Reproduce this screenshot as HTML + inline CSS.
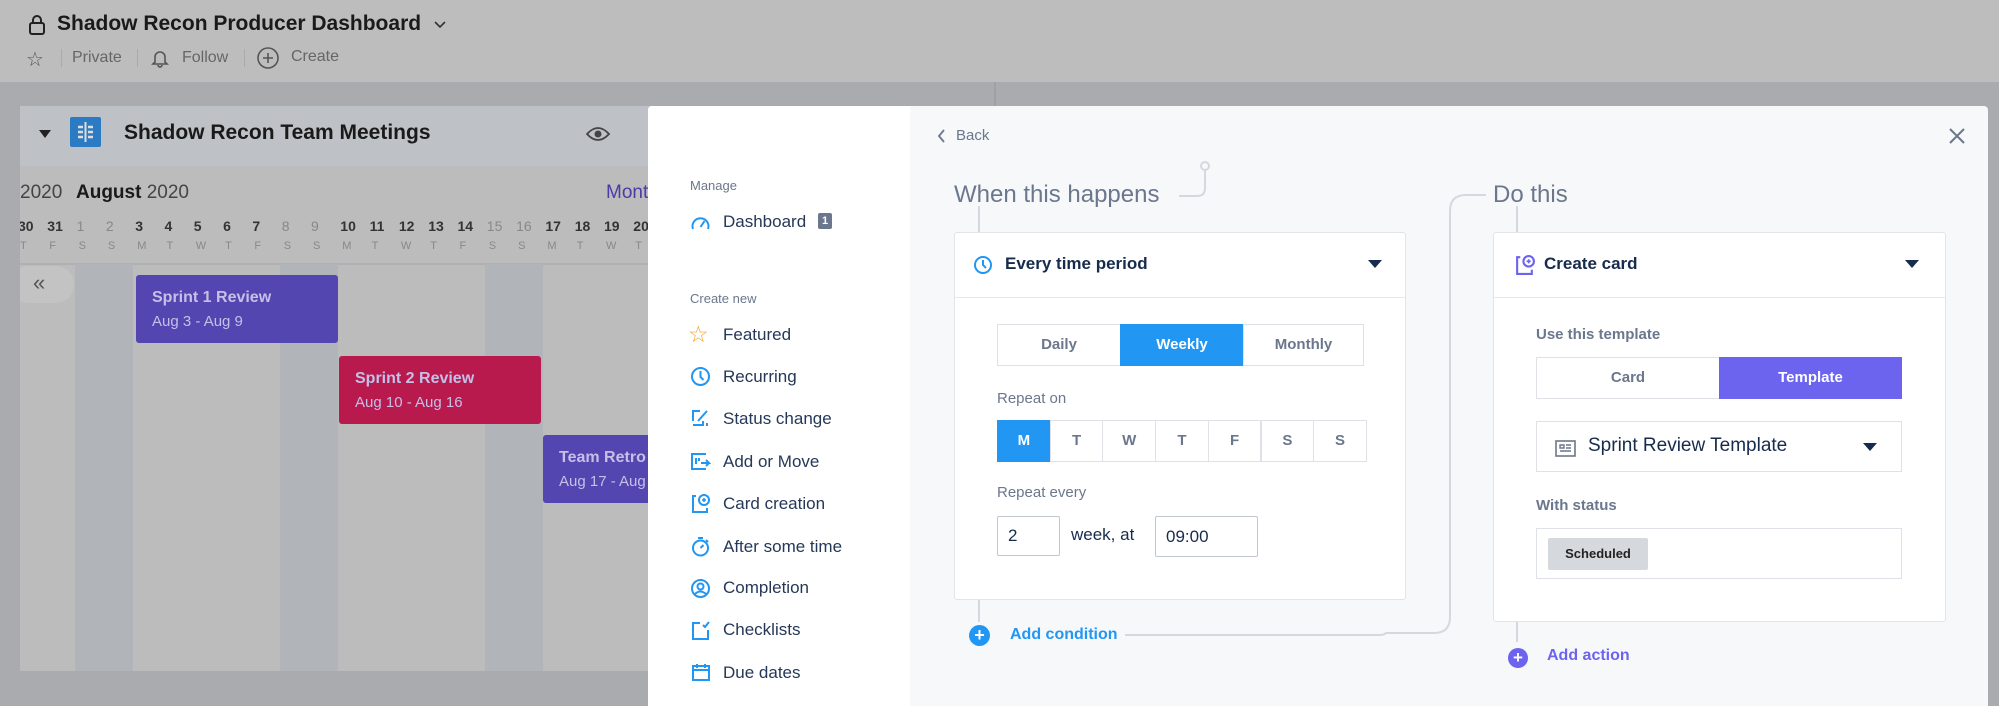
<!DOCTYPE html>
<html><head><meta charset="utf-8"><style>
*{margin:0;padding:0;box-sizing:border-box}
body{width:1999px;height:685px;overflow:hidden;position:relative;background:#a9abaf;font-family:"Liberation Sans",sans-serif;color:#172b4d}
.a{position:absolute;white-space:nowrap}
.top{left:0;top:0;width:1999px;height:82px;background:#bdbdbd}
.panel{left:20px;top:106px;width:640px;height:565px;background:#bcbcbc;overflow:hidden}
.ph{left:0;top:0;width:640px;height:61px;background:#bec1c6}
.col{top:158px;width:29.3px;height:420px}
.wk{background:#b1b4b9}
.ev{height:68px;border-radius:3px;padding:14px 0 0 16px;color:#c4c0e8;font-size:15px}
.ev b{display:block;font-size:16px;margin-bottom:6px}
.modal{left:648px;top:106px;width:1340px;height:600px;background:#f7f8fa;border-radius:4px 4px 0 0}
.side{left:648px;top:106px;width:262px;height:600px;background:#fff;border-radius:4px 0 0 0}
.sl{font-size:13px;color:#6b778c}
.si{font-size:17px;color:#253858;left:723px}
.ic{left:690px;width:21px;height:21px}
.card{background:#fff;border:1px solid #e1e4e8;border-radius:3px}
.hd{font-size:24px;color:#6b778c}
.seg{border:1px solid #dfe1e6;background:#fff;font-size:15px;font-weight:bold;color:#6b778c;text-align:center}
.lab{font-size:15px;color:#6b778c}
.inp{background:#fff;border:1px solid #c1c7d0;border-radius:2px;font-size:17px;padding-left:10px}
</style></head><body>
<div class="a top"></div>
<div class="a" style="left:994px;top:82px;width:2px;height:24px;background:#9fa1a5"></div>
<svg class="a" style="left:27px;top:14px" width="20" height="22" viewBox="0 0 20 22"><rect x="3" y="9" width="14" height="11" rx="2" fill="none" stroke="#222" stroke-width="2"/><path d="M6 9V6a4 4 0 0 1 8 0v3" fill="none" stroke="#222" stroke-width="2"/></svg>
<div class="a" style="left:57px;top:12px;font-size:21px;font-weight:bold;color:#1a1a1a">Shadow Recon Producer Dashboard</div>
<svg class="a" style="left:433px;top:20px" width="14" height="10"><path d="M2 2l5 5 5-5" fill="none" stroke="#333" stroke-width="1.6"/></svg>
<div class="a" style="left:26px;top:47px;font-size:20px;color:#555">☆</div>
<div class="a" style="left:61px;top:49px;width:1px;height:18px;background:#aaa"></div>
<div class="a" style="left:72px;top:49px;font-size:16px;color:#666">Private</div>
<div class="a" style="left:137px;top:49px;width:1px;height:18px;background:#aaa"></div>
<svg class="a" style="left:150px;top:48px" width="20" height="20" viewBox="0 0 20 20"><path d="M5 14V9a5 5 0 0 1 10 0v5l2 2H3zM8 17a2 2 0 0 0 4 0" fill="none" stroke="#555" stroke-width="1.6"/></svg>
<div class="a" style="left:182px;top:49px;font-size:16px;color:#666">Follow</div>
<div class="a" style="left:244px;top:49px;width:1px;height:18px;background:#aaa"></div>
<svg class="a" style="left:256px;top:46px" width="24" height="24"><circle cx="12" cy="12" r="10" fill="none" stroke="#555" stroke-width="1.6"/><path d="M12 7v10M7 12h10" stroke="#555" stroke-width="1.6"/></svg>
<div class="a" style="left:291px;top:48px;font-size:16px;color:#666">Create</div>

<div class="a panel">
<div class="a ph"></div>
<div class="a" style="left:19px;top:24px;width:0;height:0;border-left:6px solid transparent;border-right:6px solid transparent;border-top:8px solid #222"></div>
<div class="a" style="left:50px;top:11px;width:31px;height:30px;background:#2b7bc4;border-radius:2px"></div>
<svg class="a" style="left:50px;top:11px" width="31" height="30"><path d="M15.5 5v20" stroke="#ddd" stroke-width="2"/><path d="M8 10h5M8 15h5M8 20h5M18 10h5M18 15h5M18 20h5" stroke="#ddd" stroke-width="2.5"/></svg>
<div class="a" style="left:104px;top:15px;font-size:21px;font-weight:bold;color:#1a1a1a">Shadow Recon Team Meetings</div>
<svg class="a" style="left:566px;top:20px" width="24" height="16"><path d="M1 8q11-12 22 0q-11 12-22 0z" fill="none" stroke="#444" stroke-width="1.8"/><circle cx="12" cy="8" r="3.5" fill="#444"/></svg>
<div class="a" style="left:0;top:60px;width:640px;height:97px;background:#bcbcbc"></div>
<div class="a" style="left:0;top:76px;font-size:19px;color:#444">2020</div>
<div class="a" style="left:56px;top:76px;font-size:19px;color:#444"><b style="color:#1a1a1a">August</b> 2020</div>
<div class="a" style="left:586px;top:76px;font-size:19px;color:#4b3aa8">Month</div>
<div class="a" style="left:0;top:157px;width:640px;height:2px;background:#aeb0b3"></div>
<div id="cal"></div>
<div class="a" style="left:-10px;top:160px;width:64px;height:37px;background:#c3c3c3;border-radius:18px"></div>
<div class="a" style="left:13px;top:164px;font-size:22px;color:#555">«</div>
<div class="a ev" style="left:116px;top:169px;width:202px;background:#5346b0"><b>Sprint 1 Review</b>Aug 3 - Aug 9</div>
<div class="a ev" style="left:319px;top:250px;width:202px;background:#b81a4e"><b>Sprint 2 Review</b>Aug 10 - Aug 16</div>
<div class="a ev" style="left:523px;top:329px;width:202px;background:#5346b0"><b>Team Retro</b>Aug 17 - Aug 23</div>
</div>

<div class="a modal"></div>
<div class="a side"></div>
<div class="a sl" style="left:690px;top:178px">Manage</div>
<svg class="a ic" style="top:213px" viewBox="0 0 21 21"><path d="M3 16a8 8 0 1 1 15 0" fill="none" stroke="#2196f3" stroke-width="2"/><path d="M10.5 14l4-6" stroke="#2196f3" stroke-width="2"/></svg>
<div class="a si" style="top:212px">Dashboard</div>
<div class="a" style="left:818px;top:213px;width:14px;height:16px;background:#6b778c;color:#fff;font-size:11px;font-weight:bold;text-align:center;line-height:16px;border-radius:2px">1</div>
<div class="a sl" style="left:690px;top:291px">Create new</div>
<div class="a" style="left:688px;top:321px;font-size:23px;color:#f5a623;line-height:26px">☆</div>
<div class="a si" style="top:325px">Featured</div>
<svg class="a ic" style="top:366px" viewBox="0 0 21 21"><circle cx="10.5" cy="10.5" r="8.5" fill="none" stroke="#2196f3" stroke-width="2"/><path d="M10.5 5v6l3 3" fill="none" stroke="#2196f3" stroke-width="2"/></svg>
<div class="a si" style="top:367px">Recurring</div>
<svg class="a ic" style="top:408px" viewBox="0 0 21 21"><path d="M10 3H3v10M3 17h10v-4M17 15v3M8 13l9-10" fill="none" stroke="#2196f3" stroke-width="2"/></svg>
<div class="a si" style="top:409px">Status change</div>
<svg class="a ic" style="top:451px" viewBox="0 0 21 21"><path d="M16 3H2v15h14" fill="none" stroke="#2196f3" stroke-width="2"/><path d="M6 7v6M9 7v3M11 12h8l-3-3M19 12l-3 3" fill="none" stroke="#2196f3" stroke-width="2"/></svg>
<div class="a si" style="top:452px">Add or Move</div>
<svg class="a ic" style="top:493px" viewBox="0 0 21 21"><path d="M6 3H3v16h14v-4" fill="none" stroke="#2196f3" stroke-width="2"/><circle cx="14" cy="7" r="5" fill="none" stroke="#2196f3" stroke-width="2"/><path d="M14 5v4M12 7h4" stroke="#2196f3" stroke-width="1.6"/></svg>
<div class="a si" style="top:494px">Card creation</div>
<svg class="a ic" style="top:536px" viewBox="0 0 21 21"><circle cx="10.5" cy="12" r="7.5" fill="none" stroke="#2196f3" stroke-width="2"/><path d="M10.5 12l3-3M8 2h5M16 4l2 2" fill="none" stroke="#2196f3" stroke-width="2"/></svg>
<div class="a si" style="top:537px">After some time</div>
<svg class="a ic" style="top:578px" viewBox="0 0 21 21"><circle cx="10.5" cy="10.5" r="8.5" fill="none" stroke="#2196f3" stroke-width="2"/><circle cx="10.5" cy="8.5" r="3" fill="none" stroke="#2196f3" stroke-width="2"/><path d="M5 16q5-5 11 0" fill="none" stroke="#2196f3" stroke-width="2"/></svg>
<div class="a si" style="top:578px">Completion</div>
<svg class="a ic" style="top:620px" viewBox="0 0 21 21"><path d="M10 3H3v16h15v-9M13 5l2 2 4-5" fill="none" stroke="#2196f3" stroke-width="2"/></svg>
<div class="a si" style="top:620px">Checklists</div>
<svg class="a ic" style="top:662px" viewBox="0 0 21 21"><rect x="3" y="4" width="16" height="14" fill="none" stroke="#2196f3" stroke-width="2"/><path d="M3 8h16M7 2v4M15 2v4" stroke="#2196f3" stroke-width="2"/></svg>
<div class="a si" style="top:663px">Due dates</div>

<svg class="a" style="left:937px;top:128px" width="10" height="16"><path d="M7 2L2 8l5 6" fill="none" stroke="#6b778c" stroke-width="1.8"/></svg>
<div class="a" style="left:956px;top:127px;font-size:15px;color:#6b778c">Back</div>
<svg class="a" style="left:1948px;top:127px" width="18" height="18"><path d="M2 2l14 14M16 2L2 16" stroke="#6b778c" stroke-width="2"/></svg>

<svg class="a" style="left:0;top:0" width="1999" height="685">
<g fill="none" stroke="#d5d9df" stroke-width="2">
<circle cx="1205" cy="166" r="4"/>
<path d="M1205 170v18q0 8-8 8h-18"/>
<path d="M979 206v26M979 600v22M1517 206v26M1517 622v20"/>
<path d="M1125 635h255q4 0 6-2h48q16 0 16-16V211q0-16 16-16h20"/>
</g></svg>
<div class="a hd" style="left:954px;top:181px">When this happens</div>
<div class="a hd" style="left:1493px;top:181px">Do this</div>

<div class="a card" style="left:954px;top:232px;width:452px;height:368px"></div>
<div class="a" style="left:955px;top:297px;width:450px;height:1px;background:#e6e8eb"></div>
<svg class="a" style="left:973px;top:255px" width="20" height="20"><circle cx="10" cy="10" r="8" fill="none" stroke="#2196f3" stroke-width="2"/><path d="M10 5v5l3 3" fill="none" stroke="#2196f3" stroke-width="2"/></svg>
<div class="a" style="left:1005px;top:254px;font-size:17px;font-weight:bold;color:#172b4d">Every time period</div>
<div class="a" style="left:1368px;top:260px;border-left:7px solid transparent;border-right:7px solid transparent;border-top:8px solid #172b4d"></div>
<div class="a seg" style="left:997px;top:324px;width:124px;height:42px;line-height:40px">Daily</div>
<div class="a seg" style="left:1120px;top:324px;width:124px;height:42px;line-height:40px;background:#2196f3;border-color:#2196f3;color:#fff">Weekly</div>
<div class="a seg" style="left:1243px;top:324px;width:121px;height:42px;line-height:40px">Monthly</div>
<div class="a lab" style="left:997px;top:390px">Repeat on</div>
<div id="days"></div>
<div class="a lab" style="left:997px;top:484px">Repeat every</div>
<div class="a inp" style="left:997px;top:516px;width:63px;height:40px;line-height:38px">2</div>
<div class="a" style="left:1071px;top:525px;font-size:17px">week, at</div>
<div class="a inp" style="left:1155px;top:516px;width:103px;height:41px;line-height:39px">09:00</div>
<div class="a" style="left:969px;top:625px;width:21px;height:21px;border-radius:50%;background:#2196f3;color:#fff;font-size:18px;line-height:21px;text-align:center;font-weight:bold">+</div>
<div class="a" style="left:1010px;top:626px;font-size:16px;font-weight:bold;color:#2196f3">Add condition</div>

<div class="a card" style="left:1493px;top:232px;width:453px;height:390px"></div>
<div class="a" style="left:1494px;top:297px;width:451px;height:1px;background:#e6e8eb"></div>
<svg class="a" style="left:1514px;top:254px" width="22" height="22" viewBox="0 0 21 21"><path d="M6 3H3v16h14v-4" fill="none" stroke="#6c63ef" stroke-width="2"/><circle cx="14" cy="7" r="5" fill="none" stroke="#6c63ef" stroke-width="2"/><path d="M14 5v4M12 7h4" stroke="#6c63ef" stroke-width="1.6"/></svg>
<div class="a" style="left:1544px;top:254px;font-size:17px;font-weight:bold;color:#172b4d">Create card</div>
<div class="a" style="left:1905px;top:260px;border-left:7px solid transparent;border-right:7px solid transparent;border-top:8px solid #172b4d"></div>
<div class="a lab" style="left:1536px;top:326px;font-weight:bold">Use this template</div>
<div class="a seg" style="left:1536px;top:357px;width:184px;height:42px;line-height:40px">Card</div>
<div class="a seg" style="left:1719px;top:357px;width:183px;height:42px;line-height:40px;background:#6c63ef;border-color:#6c63ef;color:#fff">Template</div>
<div class="a" style="left:1536px;top:421px;width:366px;height:51px;background:#fff;border:1px solid #dfe1e6"></div>
<svg class="a" style="left:1555px;top:440px" width="21" height="17"><rect x="1" y="1" width="19" height="15" fill="none" stroke="#6b778c" stroke-width="1.6"/><path d="M5 5h4v3H5zM11 5h5M11 8h5M5 11h11" stroke="#6b778c" stroke-width="1.4" fill="none"/></svg>
<div class="a" style="left:1588px;top:435px;font-size:19px;color:#172b4d">Sprint Review Template</div>
<div class="a" style="left:1863px;top:443px;border-left:7px solid transparent;border-right:7px solid transparent;border-top:8px solid #172b4d"></div>
<div class="a lab" style="left:1536px;top:497px;font-weight:bold">With status</div>
<div class="a" style="left:1536px;top:528px;width:366px;height:51px;background:#fff;border:1px solid #dfe1e6"></div>
<div class="a" style="left:1548px;top:538px;width:100px;height:32px;background:#d5d9de;border-radius:2px;font-size:13px;font-weight:bold;line-height:32px;text-align:center;color:#222">Scheduled</div>
<div class="a" style="left:1508px;top:648px;width:20px;height:20px;border-radius:50%;background:#6c63ef;color:#fff;font-size:17px;line-height:20px;text-align:center;font-weight:bold">+</div>
<div class="a" style="left:1547px;top:647px;font-size:16px;font-weight:bold;color:#6c63ef">Add action</div>

<script>
var c='',days=[[30,'T'],[31,'F'],[1,'S'],[2,'S'],[3,'M'],[4,'T'],[5,'W'],[6,'T'],[7,'F'],[8,'S'],[9,'S'],[10,'M'],[11,'T'],[12,'W'],[13,'T'],[14,'F'],[15,'S'],[16,'S'],[17,'M'],[18,'T'],[19,'W'],[20,'T'],[21,'F']];
days.forEach(function(d,i){var x=-4+i*29.3;var we=d[1]=='S';
if(we)c+='<div class="a col wk" style="left:'+x+'px"></div>';
c+='<div class="a" style="left:'+(x+2)+'px;top:112px;font-size:14px;font-weight:'+(we?'normal':'bold')+';color:'+(we?'#888':'#333')+'">'+d[0]+'</div>';
c+='<div class="a" style="left:'+(x+4)+'px;top:134px;font-size:11px;color:#888">'+d[1]+'</div>';});
document.getElementById('cal').innerHTML=c;
var s='';'MTWTFSS'.split('').forEach(function(l,i){var on=i==0;s+='<div class="a seg" style="left:'+(997+i*52.7)+'px;top:420px;width:53.7px;height:42px;line-height:40px;'+(on?'background:#2196f3;border-color:#2196f3;color:#fff':'color:#6b778c')+'">'+l+'</div>';});
document.getElementById('days').innerHTML=s;
</script>
</body></html>
